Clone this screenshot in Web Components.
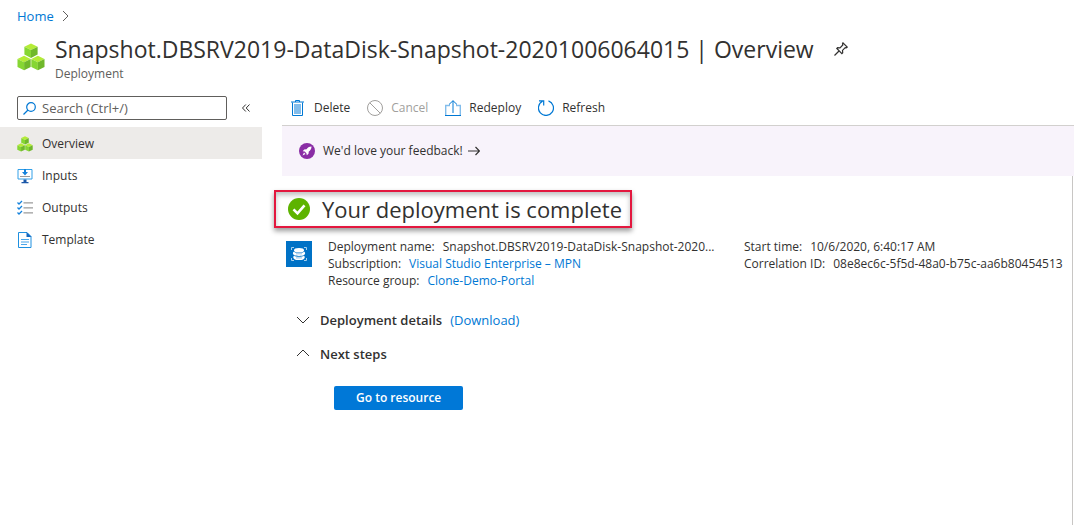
<!DOCTYPE html>
<html lang="en">
<head>
<meta charset="utf-8">
<title>Deployment overview</title>
<style>
  body { margin: 0; background: #fff; font-family: "Open Sans", "Noto Sans", sans-serif; font-size: 13px; line-height: 16px; color: #323130; }
</style>
</head>
<body>
<deploy-page></deploy-page>

<script>
const ICONS = {
  cubes: `<svg viewBox="0 0 28 28">
    <g id="c"><path fill="#b4ec36" d="M14 .5 20.600 3.700 14 7 7.400 3.700Z"/><path fill="#86d633" d="M7.400 3.700 14 7V15L7.400 11.600Z"/><path fill="#70b82b" d="M20.600 3.700 14 7V15L20.600 11.600Z"/></g>
    <use href="#c" x="-6.900" y="12.300"/><use href="#c" x="6.900" y="12.300"/></svg>`,
  inputs: `<svg viewBox="0 0 16 16"><path fill="#fff" stroke="#32a0e8" d="M1 1.500h14v9.500H1z"/><path fill="#9a9a9a" d="M3 8h10v1H3z"/><path fill="#1482dc" d="M7 1h2v3h2L8 7.500 5 4h2z"/><path fill="#1b57a8" d="M6.500 11.500h3V14h2v1.200h-7V14h2z"/></svg>`,
  outputs: `<svg viewBox="0 0 16 16"><path fill="none" stroke="#1482dc" stroke-width="1.300" d="M.5 2.500 2 4 5 1M.5 7.500 2 9 5 6M.5 12.500 2 14l3-3"/><path fill="#9b9b9b" d="M6.500 2.300H16v1.300H6.500zM6.500 7.300H16v1.300H6.500zM6.500 12.300H16v1.300H6.500z"/></svg>`,
  template: `<svg viewBox="0 0 16 16"><path fill="#fff" stroke="#1e90e0" d="M1.500.5h8.500l4 4v11h-12.500z"/><path fill="#1468c0" d="M9.500 0 14.500 5h-5z"/><path fill="#4aa6ea" d="M4 7h8v1H4zM4 9.500h8v1H4zM4 12h6v1H4z"/></svg>`,
  trash: `<svg viewBox="0 0 16 16"><path fill="none" stroke="#0078d4" d="M2.500 2.500V15.500h10V2.500M1 2h13M5.500 2V.5h4V2"/><path fill="#83bdeb" d="M4 4h7v10H4z"/></svg>`,
  cancel: `<svg viewBox="0 0 16 16"><g fill="none" stroke="#a19f9d"><circle cx="8" cy="8" r="7.500"/><path d="M2.700 2.700 13.300 13.300"/></g></svg>`,
  redeploy: `<svg viewBox="0 0 16 16"><path fill="none" stroke="#83bdeb" stroke-width="1.400" d="M5 5.500H.7V15M11 5.500h4.300V15"/><path fill="none" stroke="#0078d4" d="M0 15.500h16M8 13V.8M4 4.500 8 .7l4 3.800"/></svg>`,
  refresh: `<svg viewBox="0 0 16 16"><path fill="none" stroke="#0078d4" stroke-width="1.200" d="M10.500.9A7.500 7.500 0 1 1 4.500 1.300M1 .8h4.700v4.700"/></svg>`,
  rocket: `<svg viewBox="0 0 16 16"><circle cx="8" cy="8" r="8" fill="#8a2da5"/><path fill="#fff" d="M12.500 3.500c-2.500 0-4 1.300-5 2.700l-2.300.3L3.700 8.300l2 .3 1.700 1.700.4 2 1.700-1.500.3-2.300c1.500-1 2.700-2.500 2.700-5zM5 9.500 3.500 12.500l3-1.500z"/></svg>`,
  arrow: `<svg viewBox="0 0 12 12"><path fill="none" stroke="#323130" stroke-width="1.200" d="M0 6h11.500M7.500 2l4 4-4 4"/></svg>`,
  check: `<svg viewBox="0 0 22 22"><circle cx="11" cy="11" r="11" fill="#5db300"/><path fill="none" stroke="#fff" stroke-width="2.600" d="m5.500 11.300 4 4 7-8"/></svg>`,
  snapshot: `<svg viewBox="0 0 26 26"><path fill="#0072c6" d="M0 0h26v26H0z"/><path fill="none" stroke="#a8d0ee" d="M5.500 9V6.500H8M18 6.500h2.500V9M5.500 17v2.500H8M18 19.500h2.500V17"/><g fill="#fff"><ellipse cx="13" cy="9.300" rx="5" ry="2.300"/><path d="M8 10.500c1 2 9 2 10 0 1.500 1 1.500 2.500 0 3.500-2 1.200-8 1.200-10 0-1.500-1-1.500-2.500 0-3.500zM8 14.800c2 1.400 8 1.400 10 0 1.200 1 1 2.500-.5 3.400-2 1.200-7 1.200-9 0-1.500-.9-1.700-2.400-.5-3.400z"/></g><path fill="none" stroke="#5ba5dc" stroke-width=".7" d="M10 12.800h6M10 16.900h6"/></svg>`,
  search: `<svg viewBox="0 0 13 13"><g fill="none" stroke="#0078d4" stroke-width="1.200"><circle cx="8" cy="5" r="4.300"/><path d="M5 8 .5 12.500"/></g></svg>`,
  pin: `<svg viewBox="0 0 14 14"><path fill="none" stroke="#323130" stroke-width="1.200" d="M9 .8 13.200 5l-1 .8-1-.2-2.700 2.800.2 2.400-.8.8L2.800 6.500l.8-.9 2.400.2L8.800 3l-.3-1.200zM5 9 .5 13.500"/></svg>`,
  right: `<svg viewBox="0 0 12 12"><path fill="none" stroke="#605e5c" d="m3 1 5 5-5 5"/></svg>`,
  down: `<svg viewBox="0 0 12 12"><path fill="none" stroke="#323130" d="m0 3 6 6 6-6"/></svg>`,
  up: `<svg viewBox="0 0 12 12"><path fill="none" stroke="#323130" d="m0 8 6-6 6 6"/></svg>`,
  collapse: `<svg viewBox="0 0 8 8"><path fill="none" stroke="#323130" d="M3.800.5.500 4l3.300 3.500M7.500.5 4.200 4l3.300 3.500"/></svg>`
};

class AzIcon extends HTMLElement {
  connectedCallback() {
    this.attachShadow({ mode: "open" });
    const size = this.getAttribute("size") || "16";
    this.shadowRoot.innerHTML = `
      <style>
        :host { display: block; flex: none; width: ${size}px; height: ${size}px; }
        svg { display: block; width: 100%; height: 100%; }
      </style>
      ${ICONS[this.getAttribute("name")]}
    `;
  }
}

class NavItem extends HTMLElement {
  connectedCallback() {
    this.attachShadow({ mode: "open" });
    this.shadowRoot.innerHTML = `
      <style>
        :host { display: block; }
        :host([selected]) { background: #edebe9; }
        a { display: flex; align-items: center; gap: 9px; box-sizing: border-box; height: 32px; padding: 2px 0 0 17px; font-size: 12px; color: inherit; text-decoration: none; }
      </style>
      <a href="#"><az-icon name="${this.getAttribute("icon")}"></az-icon><slot></slot></a>
    `;
  }
}

class CommandButton extends HTMLElement {
  connectedCallback() {
    this.attachShadow({ mode: "open" });
    this.shadowRoot.innerHTML = `
      <style>
        :host { display: block; }
        button { display: flex; align-items: center; gap: 8px; height: 24px; padding: 0; border: 0; background: none; font: inherit; font-size: 12px; color: inherit; cursor: pointer; }
        button:disabled { color: #a19f9d; cursor: default; }
      </style>
      <button ${this.hasAttribute("disabled") ? "disabled" : ""}>
        <az-icon name="${this.getAttribute("icon")}"></az-icon><slot></slot>
      </button>
    `;
  }
}

class PageHeader extends HTMLElement {
  connectedCallback() {
    this.attachShadow({ mode: "open" });
    this.shadowRoot.innerHTML = `
      <style>
        :host { display: block; padding: 8px 17px 0; }
        nav { display: flex; align-items: center; gap: 6px; }
        nav a { color: #0078d4; text-decoration: none; }
        .title { display: flex; align-items: center; gap: 10px; margin-top: 8px; }
        .row { display: flex; align-items: center; gap: 20px; }
        h1 { margin: 0; font-size: 23px; line-height: 34px; font-weight: 500; white-space: nowrap; }
        h1 span { font-weight: 400; }
        p { margin: 0; font-size: 12px; line-height: 16px; color: #605e5c; }
        button { padding: 0; border: 0; background: none; }
      </style>
      <nav aria-label="Breadcrumb"><a href="#">Home</a><az-icon name="right" size="12"></az-icon></nav>
      <div class="title">
        <az-icon name="cubes" size="28"></az-icon>
        <div>
          <div class="row">
            <h1><slot></slot> <span>| Overview</span></h1>
            <button aria-label="Pin"><az-icon name="pin" size="14"></az-icon></button>
          </div>
          <p>Deployment</p>
        </div>
      </div>
    `;
  }
}

class SideMenu extends HTMLElement {
  connectedCallback() {
    this.attachShadow({ mode: "open" });
    this.shadowRoot.innerHTML = `
      <style>
        :host { display: block; }
        .search { display: flex; align-items: center; gap: 15px; padding: 0 12px 7px 17px; }
        label { display: flex; align-items: center; gap: 6px; box-sizing: border-box; width: 210px; height: 24px; padding: 0 5px; border: 1px solid #605e5c; border-radius: 2px; }
        input { flex: 1; min-width: 0; padding: 0; border: 0; outline: 0; background: none; font: inherit; color: inherit; }
        input::placeholder { color: #605e5c; }
        button { padding: 0; border: 0; background: none; }
      </style>
      <div class="search">
        <label><az-icon name="search" size="13"></az-icon><input type="text" placeholder="Search (Ctrl+/)" aria-label="Search"></label>
        <button aria-label="Collapse menu"><az-icon name="collapse" size="8"></az-icon></button>
      </div>
      <nav><slot></slot></nav>
    `;
  }
}

class FeedbackBanner extends HTMLElement {
  connectedCallback() {
    this.attachShadow({ mode: "open" });
    this.shadowRoot.innerHTML = `
      <style>
        :host { display: block; background: #f8f3fb; }
        a { display: flex; align-items: center; gap: 8px; height: 50px; padding-left: 17px; font-size: 12px; color: inherit; text-decoration: none; }
        span { display: flex; align-items: center; gap: 5px; }
      </style>
      <a href="#"><az-icon name="rocket"></az-icon><span><slot></slot><az-icon name="arrow" size="12"></az-icon></span></a>
    `;
  }
}

class StatusTitle extends HTMLElement {
  connectedCallback() {
    this.attachShadow({ mode: "open" });
    this.shadowRoot.innerHTML = `
      <style>
        :host { display: flex; align-items: center; gap: 12px; box-sizing: border-box; width: fit-content; height: 38px; padding: 0 8px 0 12px; border: 2px solid #e3173e; box-shadow: 0 3px 5px rgba(0,0,0,0.4), inset 0 3px 5px rgba(0,0,0,0.25); }
        h2 { margin: 0; font-size: 22px; line-height: 32px; font-weight: 400; white-space: nowrap; }
      </style>
      <az-icon name="check" size="22"></az-icon>
      <h2><slot></slot></h2>
    `;
  }
}

class DetailItem extends HTMLElement {
  connectedCallback() {
    this.attachShadow({ mode: "open" });
    this.shadowRoot.innerHTML = `
      <style>
        :host { display: flex; gap: 8px; font-size: 12px; line-height: 17px; white-space: nowrap; }
        ::slotted(a) { color: #0078d4; text-decoration: none; }
      </style>
      <span>${this.getAttribute("label")}:</span><span><slot></slot></span>
    `;
  }
}

class FoldSection extends HTMLElement {
  connectedCallback() {
    this.attachShadow({ mode: "open" });
    const open = this.hasAttribute("open");
    this.shadowRoot.innerHTML = `
      <style>
        :host { display: block; }
        .head { display: flex; gap: 8px; height: 34px; align-items: center; }
        button { display: flex; align-items: center; gap: 11px; padding: 0; border: 0; background: none; font: inherit; font-weight: 600; color: inherit; }
        ::slotted(a) { color: #0078d4; text-decoration: none; }
        .body { padding: 15px 0 0 37px; }
      </style>
      <div class="head">
        <button aria-expanded="${open}"><az-icon name="${open ? "up" : "down"}" size="12"></az-icon>${this.getAttribute("heading")}</button>
        <slot name="extra"></slot>
      </div>
      ${open ? `<div class="body"><slot></slot></div>` : ""}
    `;
  }
}

class PrimaryButton extends HTMLElement {
  connectedCallback() {
    this.attachShadow({ mode: "open" });
    this.shadowRoot.innerHTML = `
      <style>
        :host { display: block; }
        button { height: 24px; padding: 0 22px; border: 0; border-radius: 2px; background: #0078d7; color: #fff; font: inherit; font-size: 12px; font-weight: 600; }
      </style>
      <button><slot></slot></button>
    `;
  }
}

class DeployPage extends HTMLElement {
  connectedCallback() {
    this.attachShadow({ mode: "open" });
    this.shadowRoot.innerHTML = `
      <style>
        :host { display: flex; flex-direction: column; min-height: 100vh; }
        .columns { flex: 1; display: grid; grid-template-columns: 262px minmax(0, 1fr); gap: 20px; padding-top: 14px; }
        main { display: flex; flex-direction: column; }
        .commands { display: flex; gap: 17px; height: 30px; padding-left: 8px; box-sizing: border-box; border-bottom: 1px solid #d2d0ce; }
        .content { flex: 1; margin-right: 1px; padding-top: 14px; border-right: 1px solid #c8c6c4; }
        status-title { margin-left: -8px; }
        .essentials { display: grid; grid-template-columns: 26px 398px minmax(0, 1fr); padding: 10px 0 0 4px; }
        .essentials az-icon { margin-top: 3px; }
        .essentials div { padding-left: 16px; }
        .essentials div + div { padding-left: 34px; overflow: hidden; }
        .folds { padding: 14px 0 0 15px; }
      </style>
      <page-header>Snapshot.DBSRV2019-DataDisk-Snapshot-20201006064015</page-header>
      <div class="columns">
        <side-menu>
          <nav-item icon="cubes" selected>Overview</nav-item>
          <nav-item icon="inputs">Inputs</nav-item>
          <nav-item icon="outputs">Outputs</nav-item>
          <nav-item icon="template">Template</nav-item>
        </side-menu>
        <main>
          <div class="commands">
            <command-button icon="trash">Delete</command-button>
            <command-button icon="cancel" disabled>Cancel</command-button>
            <command-button icon="redeploy">Redeploy</command-button>
            <command-button icon="refresh">Refresh</command-button>
          </div>
          <feedback-banner>We'd love your feedback!</feedback-banner>
          <div class="content">
            <status-title>Your deployment is complete</status-title>
            <div class="essentials">
              <az-icon name="snapshot" size="26"></az-icon>
              <div>
                <detail-item label="Deployment name">Snapshot.DBSRV2019-DataDisk-Snapshot-2020...</detail-item>
                <detail-item label="Subscription"><a href="#">Visual Studio Enterprise – MPN</a></detail-item>
                <detail-item label="Resource group"><a href="#">Clone-Demo-Portal</a></detail-item>
              </div>
              <div>
                <detail-item label="Start time">10/6/2020, 6:40:17 AM</detail-item>
                <detail-item label="Correlation ID">08e8ec6c-5f5d-48a0-b75c-aa6b80454513</detail-item>
              </div>
            </div>
            <div class="folds">
              <fold-section heading="Deployment details"><a slot="extra" href="#">(Download)</a></fold-section>
              <fold-section heading="Next steps" open><primary-button>Go to resource</primary-button></fold-section>
            </div>
          </div>
        </main>
      </div>
    `;
  }
}

customElements.define("az-icon", AzIcon);
customElements.define("nav-item", NavItem);
customElements.define("command-button", CommandButton);
customElements.define("page-header", PageHeader);
customElements.define("side-menu", SideMenu);
customElements.define("feedback-banner", FeedbackBanner);
customElements.define("status-title", StatusTitle);
customElements.define("detail-item", DetailItem);
customElements.define("fold-section", FoldSection);
customElements.define("primary-button", PrimaryButton);
customElements.define("deploy-page", DeployPage);
</script>
</body>
</html>
